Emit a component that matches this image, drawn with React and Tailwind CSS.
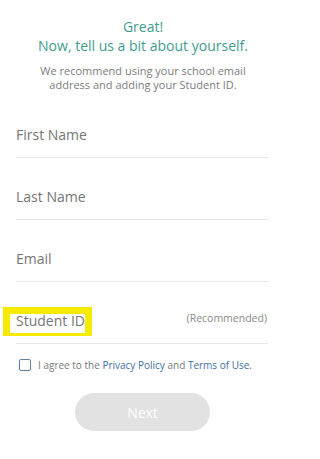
import React from "react";

function Field({ label, children }) {
  return (
    <div className="h-[62px] pt-[29px] ml-[16px] mr-[18px] border-b border-[#e8e8e8] box-border">
      <div className="flex items-start justify-between">
        {children ? children : <span className="text-[14px] leading-[20px] text-[#757575]">{label}</span>}
      </div>
    </div>
  );
}

export default function App() {
  return (
    <div
      className="w-[286px] h-[459px] bg-white overflow-hidden"
      style={{ fontFamily: '"Open Sans", "DejaVu Sans", sans-serif' }}
    >
      <div className="pt-[17px] text-center text-[14px] leading-[19px] text-[#3f9d8e]">
        <div>Great!</div>
        <div>Now, tell us a bit about yourself.</div>
      </div>
      <div className="mt-[9px] text-center text-[11px] leading-[13.5px] text-[#7d7d7d]">
        <div>We recommend using your school email</div>
        <div>address and adding your Student ID.</div>
      </div>

      <div className="mt-[5px]">
        <Field label="First Name" />
        <Field label="Last Name" />
        <Field label="Email" />
        <Field>
          <span className="relative text-[14px] leading-[20px] text-[#757575]">
            <span className="absolute left-[-13px] right-[-7px] top-[-4px] bottom-[-5px] border-t-[7px] border-b-[3px] border-l-[7px] border-r-[7px] border-[#f5ea00]"></span>
            <span className="relative">Student ID</span>
          </span>
          <span className="text-[10.5px] leading-[14px] text-[#8a8a8a] pr-[1px]">(Recommended)</span>
        </Field>
      </div>

      <div className="mt-[14px] pl-[19px] flex items-center text-[10px] leading-[14px] text-[#7a7a7a]">
        <span className="w-[12px] h-[12px] rounded-[2px] border-[1.5px] border-[#5d81a9] box-border shrink-0"></span>
        <span className="ml-[7px] whitespace-nowrap">
          I agree to the <span className="text-[#3f6fa3]">Privacy Policy</span> and{" "}
          <span className="text-[#3f6fa3]">Terms of Use.</span>
        </span>
      </div>

      <div className="mt-[21px] flex justify-center">
        <button className="w-[135px] h-[38px] rounded-full bg-[#e2e2e2] text-white text-[14px] ml-[-1px]">
          Next
        </button>
      </div>
    </div>
  );
}
